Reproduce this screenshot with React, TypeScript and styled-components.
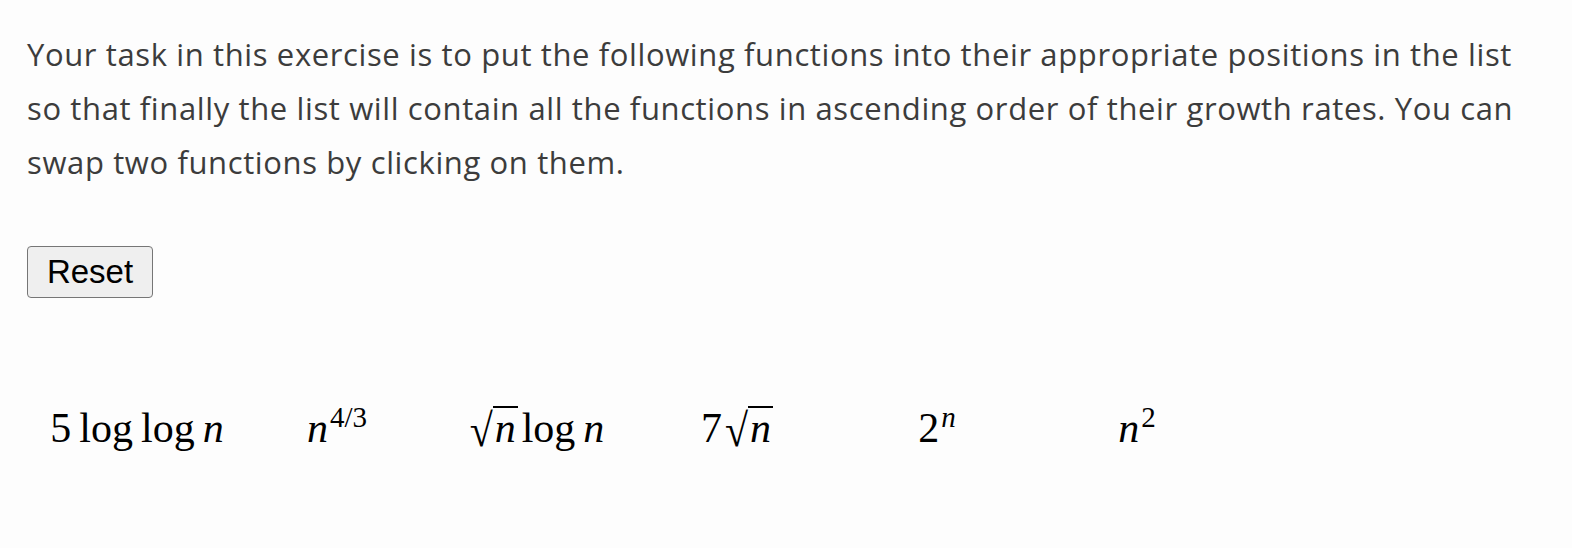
import React, {useState} from 'react';
import styled, {createGlobalStyle} from 'styled-components';

const GlobalStyle = createGlobalStyle`
  html, body {
    margin: 0;
    padding: 0;
    background: #fdfdfd;
  }
`

const Page = styled.div`
  padding: 27px 27px 0 27px;
  font-family: "Open Sans", "Liberation Sans", sans-serif;
`

const Intro = styled.p`
  margin: 0;
  font-size: 31px;
  line-height: 54px;
  color: #3c3c3c;
  letter-spacing: 0.62px;
  white-space: nowrap;
`

const ResetButton = styled.button`
  margin-top: 57px;
  width: 126px;
  height: 52px;
  background: #efefef;
  border: 1.5px solid #767676;
  border-radius: 4px;
  font-family: "Liberation Sans", Arial, sans-serif;
  font-size: 33px;
  color: #000;
  cursor: pointer;
`

const FunctionList = styled.div`
  display: flex;
  margin: 98px 0 0 10px;
`

const Cell = styled.div<{ selected: boolean }>`
  width: 200px;
  text-align: center;
  font-family: "Liberation Serif", "DejaVu Serif", serif;
  font-size: 42px;
  line-height: 64px;
  color: ${(props) => props.selected ? "#c00" : "#000"};
  cursor: pointer;
  white-space: nowrap;
`

const Ital = styled.i`
  font-style: italic;
`

const Op = styled.span<{ gap?: number }>`
  margin-left: ${(props) => props.gap ?? 8}px;
`

const Sup = styled.sup`
  font-size: 29px;
  line-height: 0;
  vertical-align: 0;
  position: relative;
  top: -15px;
  margin-left: 2px;
`

const Radical = styled.span`
  display: inline-block;
  white-space: nowrap;
`

const RadicalSign = styled.span`
  display: inline-block;
  transform: scaleY(1.1) translateY(2px);
`

const Radicand = styled.span`
  display: inline-block;
  border-top: 2px solid #000;
  line-height: 40px;
  padding: 0 2px;
`

type Fn = { id: string, render: () => React.ReactNode };

const Sqrt = ({children}: { children: React.ReactNode }) => (
    <Radical>
        <RadicalSign>√</RadicalSign>
        <Radicand>{children}</Radicand>
    </Radical>
);

const initial: Fn[] = [
    {id: "a", render: () => <>5<Op>log</Op><Op>log</Op><Op><Ital>n</Ital></Op></>},
    {id: "b", render: () => <><Ital>n</Ital><Sup>4/3</Sup></>},
    {id: "c", render: () => <><Sqrt><Ital>n</Ital></Sqrt><Op gap={4}>log</Op><Op><Ital>n</Ital></Op></>},
    {id: "d", render: () => <>7<Op gap={3}/><Sqrt><Ital>n</Ital></Sqrt></>},
    {id: "e", render: () => <>2<Sup><Ital>n</Ital></Sup></>},
    {id: "f", render: () => <><Ital>n</Ital><Sup>2</Sup></>},
];

function App() {
    const [list, setList] = useState(initial);
    const [picked, setPicked] = useState<number | null>(null);

    const click = (i: number) => {
        if (picked === null) {
            setPicked(i);
            return;
        }
        let next = [...list];
        [next[picked], next[i]] = [next[i], next[picked]];
        setList(next);
        setPicked(null);
    };

    return (
        <Page>
            <GlobalStyle/>
            <Intro>
                Your task in this exercise is to put the following functions into their appropriate positions in the list<br/>
                so that finally the list will contain all the functions in ascending order of their growth rates. You can<br/>
                swap two functions by clicking on them.
            </Intro>
            <ResetButton onClick={() => { setList(initial); setPicked(null); }}>Reset</ResetButton>
            <FunctionList>
                {list.map((fn, i) => (
                    <Cell key={fn.id} selected={picked === i} onClick={() => click(i)}>
                        {fn.render()}
                    </Cell>
                ))}
            </FunctionList>
        </Page>
    );
}

export default App;
